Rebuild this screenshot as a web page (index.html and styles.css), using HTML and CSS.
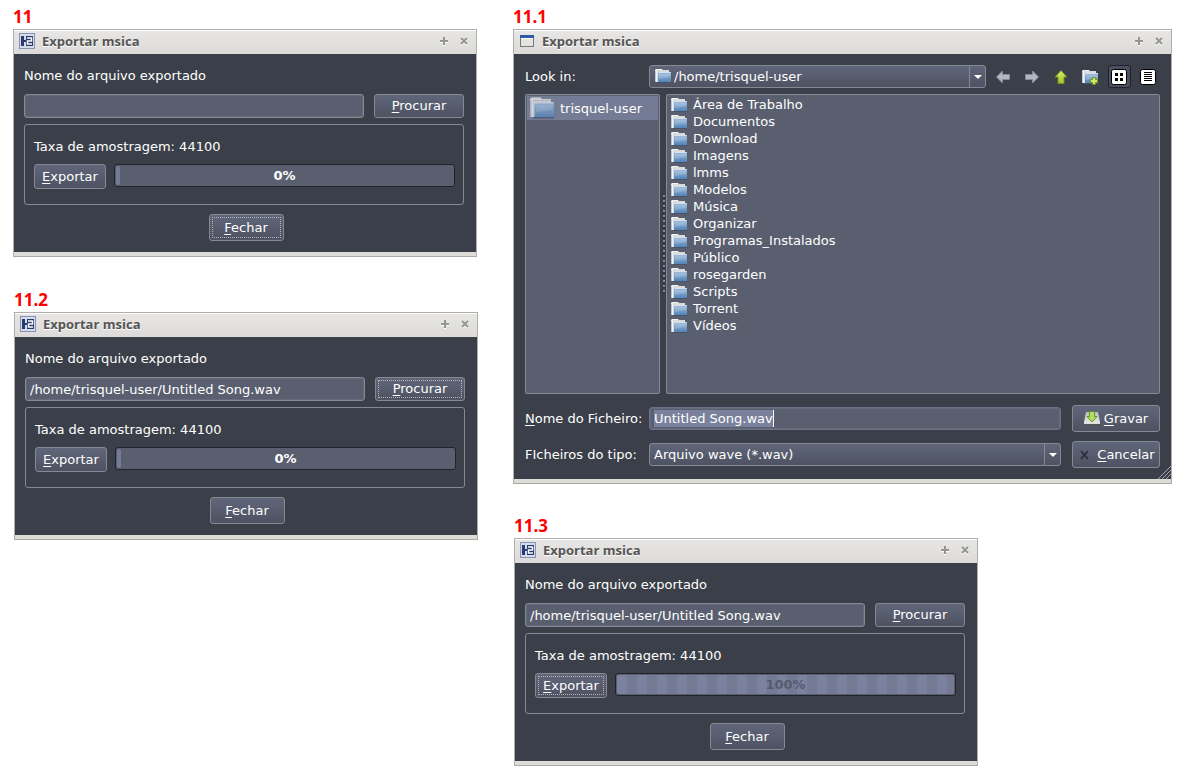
FILE: index.html
```html
<!DOCTYPE html>
<html lang="pt">
<head>
    <meta charset="UTF-8">
    <meta name="viewport" content="width=device-width, initial-scale=1.0">
    <title>Exportar msica</title>
    <link rel="stylesheet" href="styles.css">
</head>
<body>
    <!-- shared icons -->
    <svg class="sprite" aria-hidden="true">
        <defs>
            <linearGradient id="blue" x1="0" y1="0" x2="0" y2="1">
                <stop offset="0" stop-color="#a3c0de"/>
                <stop offset="1" stop-color="#5283b8"/>
            </linearGradient>
            <linearGradient id="green" x1="0" y1="0" x2="0" y2="1">
                <stop offset="0" stop-color="#e0ec62"/>
                <stop offset="1" stop-color="#9cc42c"/>
            </linearGradient>
            <linearGradient id="disk" x1="0" y1="0" x2="0" y2="1">
                <stop offset="0" stop-color="#b9bbb9"/>
                <stop offset="1" stop-color="#f2f2f2"/>
            </linearGradient>
        </defs>
        <symbol id="folder" viewBox="0 0 16 16">
            <path d="M0 14V2l1-1h6l1 1h6v3H3v9z" fill="#f2f2f0"/>
            <path d="M.5 14V3M2 3h12" stroke="#c3c4c6" fill="none"/>
            <path d="M2 14.500h14" stroke="#4a5267"/>
            <path d="M2 4h14v10H2z" fill="url(#blue)"/>
            <path d="M2.500 14v-9.500h13" stroke="#d3e1ee" fill="none"/>
            <path d="M4 6h11v3L4 11z" fill="#fff" opacity=".16"/>
        </symbol>
        <symbol id="hydrogen" viewBox="0 0 16 16">
            <rect x=".5" y=".5" width="15" height="15" fill="#d5dbe9" stroke="#8593b8"/>
            <path d="M2 3h3v4h2V3h7v10H7V9H5v4H2z" fill="#293a70"/>
            <path d="M8 5h4.500v3H8.500v3H13" fill="none" stroke="#fff" stroke-width="1.500"/>
        </symbol>
        <symbol id="window" viewBox="0 0 16 16">
            <rect x="1.500" y="2.500" width="13" height="11" fill="#e4e5e3" stroke="#777"/>
            <path d="M1 2h14v3H1z" fill="#2c5ba3"/>
            <path d="M2 5.500h12" stroke="#fff"/>
        </symbol>
        <symbol id="plus" viewBox="0 0 10 10">
            <path d="M5 2v8M1 6h8" stroke="#fff" stroke-width="2"/>
            <path d="M5 1v8M1 5h8" stroke="#959593" stroke-width="2"/>
        </symbol>
        <symbol id="cross" viewBox="0 0 10 10">
            <path d="M2 3l6 6M8 3l-6 6" stroke="#fff" stroke-width="2"/>
            <path d="M2 2l6 6M8 2l-6 6" stroke="#959593" stroke-width="2"/>
        </symbol>
        <symbol id="arrow" viewBox="0 0 16 16">
            <path d="M1.500 8l6-6v3.500h7v5h-7V14z" fill="#b3b7c1" stroke="#858a98"/>
        </symbol>
    </svg>

    <main class="sheet">
        <div class="column">
            <section class="figure">
                <h2>11</h2>
                <div class="window">
                    <header class="titlebar">
                        <svg class="icon"><use href="#hydrogen"/></svg>
                        <h3>Exportar msica</h3>
                        <button type="button" aria-label="Maximizar"><svg><use href="#plus"/></svg></button>
                        <button type="button" aria-label="Fechar janela"><svg><use href="#cross"/></svg></button>
                    </header>
                    <form class="export">
                        <label for="file1">Nome do arquivo exportado</label>
                        <div class="file-row">
                            <input type="text" id="file1">
                            <button type="button" class="btn"><span><u>P</u>rocurar</span></button>
                        </div>
                        <div class="group">
                            <p>Taxa de amostragem: 44100</p>
                            <div class="progress-row">
                                <button type="button" class="btn"><span><u>E</u>xportar</span></button>
                                <div class="progress" role="progressbar" aria-label="Progresso" aria-valuenow="0">
                                    <div class="fill" style="width: 0%"></div>
                                    <span>0%</span>
                                </div>
                            </div>
                        </div>
                        <div class="actions">
                            <button type="button" class="btn focused"><span><u>F</u>echar</span></button>
                        </div>
                    </form>
                </div>
            </section>

            <section class="figure">
                <h2>11.2</h2>
                <div class="window">
                    <header class="titlebar">
                        <svg class="icon"><use href="#hydrogen"/></svg>
                        <h3>Exportar msica</h3>
                        <button type="button" aria-label="Maximizar"><svg><use href="#plus"/></svg></button>
                        <button type="button" aria-label="Fechar janela"><svg><use href="#cross"/></svg></button>
                    </header>
                    <form class="export">
                        <label for="file2">Nome do arquivo exportado</label>
                        <div class="file-row">
                            <input type="text" id="file2" value="/home/trisquel-user/Untitled Song.wav">
                            <button type="button" class="btn focused"><span><u>P</u>rocurar</span></button>
                        </div>
                        <div class="group">
                            <p>Taxa de amostragem: 44100</p>
                            <div class="progress-row">
                                <button type="button" class="btn"><span><u>E</u>xportar</span></button>
                                <div class="progress" role="progressbar" aria-label="Progresso" aria-valuenow="0">
                                    <div class="fill" style="width: 0%"></div>
                                    <span>0%</span>
                                </div>
                            </div>
                        </div>
                        <div class="actions">
                            <button type="button" class="btn"><span><u>F</u>echar</span></button>
                        </div>
                    </form>
                </div>
            </section>
        </div>

        <div class="column right">
            <section class="figure">
                <h2>11.1</h2>
                <div class="window">
                    <header class="titlebar">
                        <svg class="icon"><use href="#window"/></svg>
                        <h3>Exportar msica</h3>
                        <button type="button" aria-label="Maximizar"><svg><use href="#plus"/></svg></button>
                        <button type="button" aria-label="Fechar janela"><svg><use href="#cross"/></svg></button>
                    </header>
                    <form class="browser">
                        <div class="lookin">
                            <label for="lookin">Look in:</label>
                            <div class="combo with-icon">
                                <svg class="icon"><use href="#folder"/></svg>
                                <select id="lookin"><option>/home/trisquel-user</option></select>
                            </div>
                            <div class="tools">
                                <button type="button" aria-label="Voltar"><svg class="icon"><use href="#arrow"/></svg></button>
                                <button type="button" aria-label="Avançar"><svg class="icon flip"><use href="#arrow"/></svg></button>
                                <button type="button" aria-label="Pasta acima">
                                    <svg class="icon" viewBox="0 0 16 16"><path d="M8 1.500l6 6.500h-3v6.500H5V8H2z" fill="url(#green)" stroke="#6f9420"/></svg>
                                </button>
                                <button type="button" aria-label="Nova pasta">
                                    <svg class="icon" viewBox="0 0 16 16">
                                        <use href="#folder"/>
                                        <path d="M10.500 8.500h3v2h2v3h-2v2h-3v-2h-2v-3h2z" fill="#d3e66a" stroke="#6f9420"/>
                                    </svg>
                                </button>
                                <button type="button" class="pressed" aria-label="Ícones">
                                    <svg class="icon" viewBox="0 0 16 16">
                                        <rect x=".5" y=".5" width="15" height="15" rx="2" fill="#fff" stroke="#000"/>
                                        <path d="M4 4h3v3H4zM9 4h3v3H9zM4 9h3v3H4zM9 9h3v3H9z"/>
                                    </svg>
                                </button>
                                <button type="button" aria-label="Lista">
                                    <svg class="icon" viewBox="0 0 16 16">
                                        <rect x=".5" y=".5" width="15" height="15" rx="2" fill="#fff" stroke="#000"/>
                                        <path d="M4 3.500h8M4 5.500h8M4 7.500h8M4 9.500h8M4 11.500h8" stroke="#000"/>
                                    </svg>
                                </button>
                            </div>
                        </div>

                        <div class="panes">
                            <ul class="pane places">
                                <li><svg class="icon"><use href="#folder"/></svg>trisquel-user</li>
                            </ul>
                            <div class="splitter"></div>
                            <ul class="pane files">
                                <li><svg class="icon"><use href="#folder"/></svg>Área de Trabalho</li>
                                <li><svg class="icon"><use href="#folder"/></svg>Documentos</li>
                                <li><svg class="icon"><use href="#folder"/></svg>Download</li>
                                <li><svg class="icon"><use href="#folder"/></svg>Imagens</li>
                                <li><svg class="icon"><use href="#folder"/></svg>lmms</li>
                                <li><svg class="icon"><use href="#folder"/></svg>Modelos</li>
                                <li><svg class="icon"><use href="#folder"/></svg>Música</li>
                                <li><svg class="icon"><use href="#folder"/></svg>Organizar</li>
                                <li><svg class="icon"><use href="#folder"/></svg>Programas_Instalados</li>
                                <li><svg class="icon"><use href="#folder"/></svg>Público</li>
                                <li><svg class="icon"><use href="#folder"/></svg>rosegarden</li>
                                <li><svg class="icon"><use href="#folder"/></svg>Scripts</li>
                                <li><svg class="icon"><use href="#folder"/></svg>Torrent</li>
                                <li><svg class="icon"><use href="#folder"/></svg>Vídeos</li>
                            </ul>
                        </div>

                        <div class="save">
                            <div class="fields">
                                <label for="filename"><u>N</u>ome do Ficheiro:</label>
                                <input type="text" id="filename" class="selected" value="Untitled Song.wav">
                                <label for="filetype">FIcheiros do tipo:</label>
                                <div class="combo">
                                    <select id="filetype"><option>Arquivo wave (*.wav)</option></select>
                                </div>
                            </div>
                            <div class="save-actions">
                                <button type="button" class="btn">
                                    <svg class="icon" viewBox="0 0 16 16">
                                        <path d="M2 1h12l2 10v4H0v-4z" fill="url(#disk)"/>
                                        <path d="M0 12.500h16V15H0z" fill="#555"/>
                                        <path d="M0 12.500h16" stroke="#ddd"/>
                                        <path d="M5.500.5h5v5h2.500L8 11 3 5.500h2.500z" fill="#b5dc5c" stroke="#5d9a2b"/>
                                    </svg>
                                    <span><u>G</u>ravar</span>
                                </button>
                                <button type="button" class="btn">
                                    <svg class="icon" viewBox="0 0 16 16"><path d="M4 4l7 8M11 4l-7 8" stroke="#272a33" stroke-width="1.500"/></svg>
                                    <span><u>C</u>ancelar</span>
                                </button>
                            </div>
                        </div>
                        <svg class="grip" viewBox="0 0 13 13"><path d="M0 13L13 0M4 13l9-9M8 13l5-5" stroke="#a5a7ae" fill="none"/></svg>
                    </form>
                </div>
            </section>

            <section class="figure narrow">
                <h2>11.3</h2>
                <div class="window">
                    <header class="titlebar">
                        <svg class="icon"><use href="#hydrogen"/></svg>
                        <h3>Exportar msica</h3>
                        <button type="button" aria-label="Maximizar"><svg><use href="#plus"/></svg></button>
                        <button type="button" aria-label="Fechar janela"><svg><use href="#cross"/></svg></button>
                    </header>
                    <form class="export">
                        <label for="file3">Nome do arquivo exportado</label>
                        <div class="file-row">
                            <input type="text" id="file3" value="/home/trisquel-user/Untitled Song.wav">
                            <button type="button" class="btn"><span><u>P</u>rocurar</span></button>
                        </div>
                        <div class="group">
                            <p>Taxa de amostragem: 44100</p>
                            <div class="progress-row">
                                <button type="button" class="btn focused"><span><u>E</u>xportar</span></button>
                                <div class="progress done" role="progressbar" aria-label="Progresso" aria-valuenow="100">
                                    <div class="fill" style="width: 100%"></div>
                                    <span>100%</span>
                                </div>
                            </div>
                        </div>
                        <div class="actions">
                            <button type="button" class="btn"><span><u>F</u>echar</span></button>
                        </div>
                    </form>
                </div>
            </section>
        </div>
    </main>
</body>
</html>
```
FILE: styles.css
```css
* {
    box-sizing: border-box;
}

body {
    margin: 0;
    background-color: #fff;
    color: #fff;
    font-family: "DejaVu Sans", sans-serif;
    font-size: 13px;
}

h2, h3, p, ul {
    margin: 0;
    padding: 0;
}

ul {
    list-style: none;
}

button, input, select {
    margin: 0;
    color: inherit;
    font: inherit;
}

u {
    text-underline-offset: 2px;
    text-decoration-thickness: 1px;
}

.sprite {
    position: absolute;
    width: 0;
    height: 0;
}

.icon {
    flex: none;
    display: block;
    width: 16px;
    height: 16px;
}

.flip {
    transform: scaleX(-1);
}

/* sheet */
.sheet {
    display: grid;
    grid-template-columns: minmax(0, 464px) minmax(0, 1fr);
    gap: 36px;
    padding: 5px 13px 10px;
}

.column {
    display: flex;
    flex-direction: column;
    gap: 31px;
}

.right {
    gap: 30px;
}

.figure + .figure {
    margin-left: 1px;
}

.column:first-child .figure + .figure {
    margin-right: -1px;
}

.narrow {
    width: 100%;
    max-width: 464px;
}

h2 {
    color: #f00;
    font-family: "Open Sans", sans-serif;
    font-size: 17px;
    font-weight: bold;
    line-height: 24px;
}

/* window frame */
.window {
    border: 1px solid #b0aeab;
    border-bottom-color: #aaa8a5;
    background-color: #dedcd9;
    padding-bottom: 4px;
}

.titlebar {
    display: flex;
    align-items: center;
    height: 24px;
    padding: 0 2px 3px 5px;
    border-top: 1px solid #fff;
    background: linear-gradient(#e7e6e4, #dcdbd9);
}

.titlebar h3 {
    flex: 1;
    margin-left: 7px;
    color: #555;
    font-family: "Open Sans", sans-serif;
    font-size: 13px;
    font-weight: bold;
    line-height: 20px;
    text-shadow: 0 1px 0 #fff;
}

.titlebar button {
    display: flex;
    justify-content: center;
    align-items: center;
    width: 20px;
    height: 20px;
    padding: 0;
    border: none;
    background: none;
}

.titlebar button svg {
    width: 10px;
    height: 10px;
}

.export, .browser {
    background-color: #3b3f49;
}

/* controls */
.btn {
    display: flex;
    justify-content: center;
    align-items: center;
    padding: 0;
    border: 1px solid #868991;
    border-radius: 3px;
    background: linear-gradient(#60667a, #4e5262);
}

.focused {
    outline: 1px dotted #b5b6b0;
    outline-offset: -4px;
}

input {
    min-width: 0;
    padding: 0 4px;
    border: 1px solid #868991;
    border-radius: 3px;
    background-color: #5a5f70;
    box-shadow: inset 0 0 0 1px #64697b;
}

.combo {
    position: relative;
    height: 23px;
}

.combo select {
    display: block;
    width: 100%;
    height: 100%;
    padding: 0 20px 0 4px;
    border: 1px solid #868991;
    border-radius: 3px;
    background: linear-gradient(#60667a, #4e5262);
    appearance: none;
}

.combo::before {
    content: "";
    position: absolute;
    top: 1px;
    bottom: 1px;
    right: 16px;
    border-left: 1px solid #868991;
}

.combo::after {
    content: "";
    position: absolute;
    top: 10px;
    right: 4px;
    border: 4px solid transparent;
    border-top-color: #fff;
    border-bottom: none;
}

.with-icon select {
    padding-left: 24px;
}

.with-icon .icon {
    position: absolute;
    top: 3px;
    left: 6px;
}

/* export dialog */
.export {
    display: flex;
    flex-direction: column;
    padding: 12px 12px 11px 10px;
}

.export > label {
    line-height: 20px;
}

.file-row {
    display: flex;
    gap: 10px;
    height: 24px;
    margin-top: 8px;
}

.file-row input {
    flex: 1;
}

.file-row .btn {
    width: 90px;
    padding-bottom: 2px;
}

.group {
    margin-top: 6px;
    padding: 13px 8px 15px 9px;
    border: 1px solid #868991;
    border-radius: 3px;
}

.group p {
    line-height: 18px;
}

.progress-row {
    display: flex;
    gap: 8px;
    margin-top: 8px;
}

.progress-row .btn {
    width: 72px;
    height: 25px;
}

.progress {
    position: relative;
    flex: 1;
    height: 23px;
    padding: 1px;
    border: 1px solid #20222a;
    border-radius: 3px;
    background-color: #5a5f70;
    font-weight: bold;
    line-height: 21px;
    text-align: center;
}

.progress .fill {
    min-width: 4px;
    height: 100%;
    border-radius: 2px;
    background-color: #747b95;
}

.progress span {
    position: absolute;
    inset: 0;
}

.done {
    color: #555a6d;
}

.done .fill {
    background: repeating-linear-gradient(90deg, #7b829f 0 10px, #747a94 10px 20px);
}

.actions {
    display: flex;
    justify-content: center;
    margin-top: 9px;
    padding-left: 4px;
}

.actions .btn {
    width: 75px;
    height: 27px;
}

/* file browser dialog */
.browser {
    position: relative;
    padding: 11px;
}

.lookin {
    display: flex;
    align-items: center;
    gap: 6px;
}

.lookin label {
    width: 118px;
}

.lookin .combo {
    flex: 1;
}

.tools {
    display: flex;
    gap: 6px;
}

.tools button {
    display: flex;
    justify-content: center;
    align-items: center;
    width: 23px;
    height: 23px;
    padding: 0 1px 0 0;
    border: 1px solid transparent;
    border-radius: 3px;
    background: none;
}

.tools .pressed {
    border-color: #20222a;
    background-color: #4b4f60;
}

.panes {
    display: flex;
    height: 300px;
    margin-top: 6px;
}

.pane {
    padding: 1px;
    border: 1px solid #868991;
    border-radius: 2px;
    background-color: #5a5f70;
}

.pane li {
    display: flex;
    align-items: center;
}

.places {
    width: 135px;
}

.places li {
    gap: 6px;
    height: 24px;
    padding-left: 3px;
    background-color: #747b95;
}

.places .icon {
    width: 24px;
    height: 24px;
    opacity: .75;
}

.splitter {
    align-self: center;
    width: 6px;
    height: 98px;
    background: repeating-linear-gradient(#868b9c 0 2px, #2b2e37 2px 3px, transparent 3px 5px) 3px 0 / 2px 100% no-repeat;
}

.files {
    flex: 1;
}

.files li {
    gap: 6px;
    height: 17px;
    padding-left: 3px;
}

.save {
    display: flex;
    gap: 11px;
    margin-top: 11px;
}

.fields {
    flex: 1;
    display: grid;
    grid-template-columns: 118px minmax(0, 1fr);
    grid-auto-rows: 27px;
    align-items: center;
    gap: 9px 6px;
}

.fields label {
    white-space: nowrap;
}

.fields input {
    height: 23px;
}

/* whole name selected, caret at its end */
.selected {
    border-color: #6b7186;
    background-image: linear-gradient(#fff, #fff), linear-gradient(#7a819c, #7a819c);
    background-position: 123px 2px, 4px 2px;
    background-size: 1px 17px, 119px 17px;
    background-repeat: no-repeat;
}

.save-actions {
    display: flex;
    flex-direction: column;
    gap: 9px;
}

.save-actions .btn {
    gap: 4px;
    width: 88px;
    height: 27px;
}

.grip {
    position: absolute;
    right: 0;
    bottom: 0;
    width: 13px;
    height: 13px;
}
```
